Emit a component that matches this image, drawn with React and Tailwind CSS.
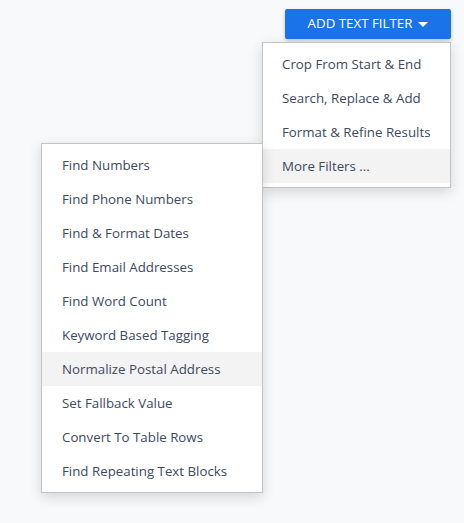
const topItems = [
  "Crop From Start & End",
  "Search, Replace & Add",
  "Format & Refine Results",
  "More Filters ...",
];

const subItems = [
  "Find Numbers",
  "Find Phone Numbers",
  "Find & Format Dates",
  "Find Email Addresses",
  "Find Word Count",
  "Keyword Based Tagging",
  "Normalize Postal Address",
  "Set Fallback Value",
  "Convert To Table Rows",
  "Find Repeating Text Blocks",
];

const MenuItem = ({ label, active, padLeft }) => (
  <div
    className={`h-[34px] flex items-center pt-[2px] ${padLeft} text-[13.3px] text-[#3d4a5f] ${
      active ? "bg-[#f3f3f3]" : ""
    }`}
  >
    {label}
  </div>
);

export default function App() {
  return (
    <div
      className="min-h-[523px] w-full bg-[#f8f9fa]"
      style={{ fontFamily: '"Open Sans", "Noto Sans", sans-serif' }}
    >
      <div className="flex justify-end pt-[9px] pr-[13px]">
        <div className="relative">
          <button className="h-[30px] w-[166px] flex items-center justify-center gap-[6px] rounded-[2px] bg-[#1a73e8] text-white text-[13.3px] uppercase shadow-[0_2px_4px_rgba(0,0,0,0.2)]">
            Add Text Filter
            <svg width="10" height="5" viewBox="0 0 10 5" fill="currentColor">
              <path d="M0 0h10L5 5z" />
            </svg>
          </button>

          {/* main dropdown */}
          <div className="absolute right-0 top-[33px] w-[189px] border border-[#c4c4c4] bg-white py-[4px] shadow-[0_4px_12px_rgba(0,0,0,0.15)]">
            {topItems.map((item, i) => (
              <MenuItem
                key={item}
                label={item}
                active={i === 3}
                padLeft="pl-[19px]"
              />
            ))}

            {/* sub menu */}
            <div className="absolute right-[187px] top-[100px] w-[222px] border border-[#c4c4c4] bg-white py-[4px] shadow-[0_4px_12px_rgba(0,0,0,0.15)]">
              {subItems.map((item, i) => (
                <MenuItem
                  key={item}
                  label={item}
                  active={i === 6}
                  padLeft="pl-[20px]"
                />
              ))}
            </div>
          </div>
        </div>
      </div>
    </div>
  );
}
